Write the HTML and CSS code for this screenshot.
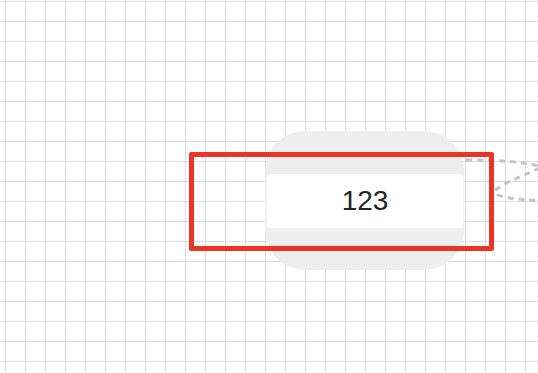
FILE: index.html
```html
<!DOCTYPE html>
<html>
<head>
<meta charset="utf-8">
<link rel="stylesheet" href="styles.css">
</head>
<body>
<div class="canvas">
  <div class="node">
    <div class="node-label">123</div>
  </div>
  <svg class="edges" width="538" height="373" viewBox="0 0 538 373">
    <path d="M466,160 C495,160 515,161 540,166" />
    <path d="M540,168 C518,178 496,186 495,192 C495,197 515,199 540,201" />
  </svg>
  <div class="selection"></div>
</div>
</body>
</html>
```
FILE: styles.css
```css
html, body {
  margin: 0;
  padding: 0;
}
body {
  width: 538px;
  height: 373px;
  overflow: hidden;
  background: #fff;
  font-family: "Liberation Sans", Arial, sans-serif;
}
.canvas {
  position: relative;
  width: 538px;
  height: 373px;
  background-color: #fff;
  background-image:
    linear-gradient(to right, #dcdcdc 1px, transparent 1px),
    linear-gradient(to bottom, #dcdcdc 1px, transparent 1px);
  background-size: 20px 20px;
  background-position: 5px 1px;
}
.node {
  position: absolute;
  left: 265px;
  top: 131px;
  width: 199px;
  height: 139px;
  box-sizing: border-box;
  padding: 43px 1px 0 2px;
  background: #eeeeee;
  border-radius: 40px;
}
.node-label {
  height: 54px;
  background: #fff;
  border-radius: 4px;
  display: flex;
  align-items: center;
  justify-content: center;
  font-size: 28px;
  color: #222;
}
.edges {
  position: absolute;
  left: 0;
  top: 0;
  fill: none;
  stroke: #c4c4c4;
  stroke-width: 3;
  stroke-dasharray: 6 5;
}
.selection {
  position: absolute;
  left: 189px;
  top: 152px;
  width: 305px;
  height: 99px;
  box-sizing: border-box;
  border: 5px solid #ec3326;
  border-radius: 2px;
}
```
